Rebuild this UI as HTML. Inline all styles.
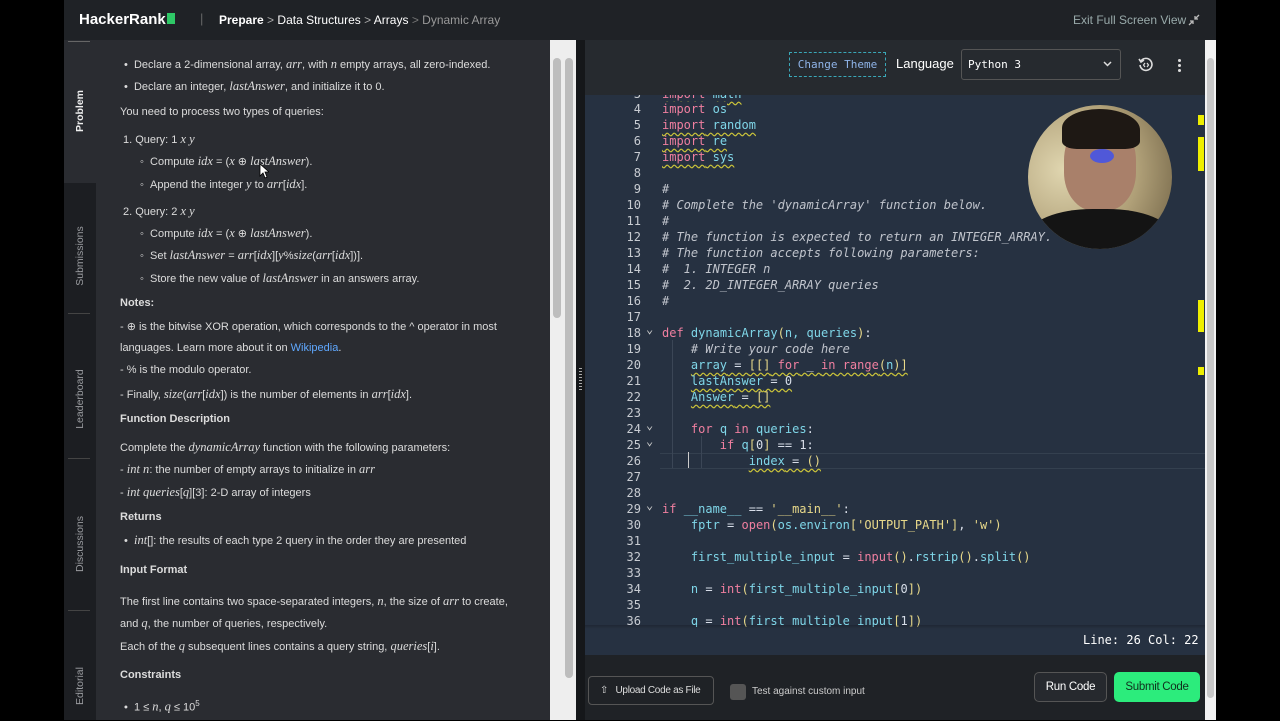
<!DOCTYPE html>
<html><head><meta charset="utf-8"><style>
*{margin:0;padding:0;box-sizing:border-box}
body{width:1280px;height:720px;background:#000;position:relative;overflow:hidden;font-family:"Liberation Sans",sans-serif}
.a{position:absolute;white-space:nowrap}
#top{left:64px;top:0;width:1152px;height:40px;background:#1f2226}
#side{left:64px;top:40px;width:32px;height:680px;background:#1c1e22}
#prob{left:96px;top:40px;width:454px;height:680px;background:#2a2c31}
.t{position:absolute;font-size:11px;color:#dcdcdc;white-space:nowrap}
.b{font-weight:bold}
i.m{font-family:"Liberation Serif",serif;font-size:12.5px}
.vt{position:absolute;transform:rotate(-90deg);transform-origin:center;font-size:10.5px;color:#9a9ca0;white-space:nowrap}
#ed{left:585px;top:40px;width:620px;height:680px;background:#1f2226}
#code{left:585px;top:95px;width:620px;height:532px;background:#263141;overflow:hidden}
#stat{left:585px;top:627px;width:620px;height:28px;background:#263141}
.c{position:absolute;font-family:"DejaVu Sans Mono",monospace;font-size:12px;white-space:pre;color:#d8dee9}
.ln{position:absolute;left:605px;width:36px;text-align:right;font-family:"DejaVu Sans Mono",monospace;font-size:12px;color:#c8ccd2}
.k{color:#f07fa0}.f{color:#7fd6e8}.cm{color:#c0c4cc;font-style:italic}.s{color:#e8d98a}.w{text-decoration:underline wavy #c9c23a;text-underline-offset:3px}
</style></head><body>
<div class="a" id="top"></div>
<div class="a" style="left:79px;top:11px;font-size:15px;font-weight:bold;color:#fff">HackerRank<span style="display:inline-block;width:8px;height:11px;background:#2ec866;margin-left:1px"></span></div>
<div class="a" style="left:200px;top:11px;color:#666;font-size:13px">|</div>
<div class="a" style="left:219px;top:13px;font-size:12px;color:#fff"><b>Prepare</b> <span style="color:#aaa">&gt;</span> Data Structures <span style="color:#aaa">&gt;</span> Arrays <span style="color:#777">&gt;</span> <span style="color:#999">Dynamic Array</span></div>
<div class="a" style="left:1073px;top:13px;font-size:12px;color:#9aa">Exit Full Screen View</div>
<svg class="a" style="left:1188px;top:14px" width="12" height="12" viewBox="0 0 12 12" stroke="#bbb" stroke-width="1.3" fill="none"><path d="M1 11L5 7M2 7H5V10M11 1L7 5M7 2V5H10"/></svg>

<div class="a" id="side"></div>
<div class="a" style="left:64px;top:40px;width:32px;height:143px;background:#2a2c31"></div>
<div class="a" style="left:68px;top:41px;width:22px;height:1px;background:#666"></div>
<div class="vt b" style="left:55px;top:105px;width:50px;text-align:center;color:#eee;font-weight:bold">Problem</div>
<div class="vt" style="left:45px;top:250px;width:70px;text-align:center">Submissions</div>
<div class="a" style="left:68px;top:313px;width:22px;height:1px;background:#444"></div>
<div class="vt" style="left:45px;top:393px;width:70px;text-align:center">Leaderboard</div>
<div class="a" style="left:68px;top:458px;width:22px;height:1px;background:#444"></div>
<div class="vt" style="left:45px;top:538px;width:70px;text-align:center">Discussions</div>
<div class="a" style="left:68px;top:610px;width:22px;height:1px;background:#444"></div>
<div class="vt" style="left:45px;top:680px;width:70px;text-align:center">Editorial</div>

<div class="a" id="prob"></div>
<div class="t" style="left:124px;top:57px">• &nbsp;Declare a 2-dimensional array, <i class="m">arr</i>, with <i class="m">n</i> empty arrays, all zero-indexed.</div>
<div class="t" style="left:124px;top:79px">• &nbsp;Declare an integer, <i class="m">lastAnswer</i>, and initialize it to 0.</div>
<div class="t" style="left:120px;top:106px">You need to process two types of queries:</div>
<div class="t" style="left:123px;top:132px">1. Query: 1 <i class="m">x y</i></div>
<div class="t" style="left:140px;top:154px">◦ &nbsp;Compute <i class="m">idx</i> = (<i class="m">x</i> ⊕ <i class="m">lastAnswer</i>).</div>
<div class="t" style="left:140px;top:177px">◦ &nbsp;Append the integer <i class="m">y</i> to <i class="m">arr</i>[<i class="m">idx</i>].</div>
<div class="t" style="left:123px;top:204px">2. Query: 2 <i class="m">x y</i></div>
<div class="t" style="left:140px;top:226px">◦ &nbsp;Compute <i class="m">idx</i> = (<i class="m">x</i> ⊕ <i class="m">lastAnswer</i>).</div>
<div class="t" style="left:140px;top:248px">◦ &nbsp;Set <i class="m">lastAnswer</i> = <i class="m">arr</i>[<i class="m">idx</i>][<i class="m">y</i>%<i class="m">size</i>(<i class="m">arr</i>[<i class="m">idx</i>])].</div>
<div class="t" style="left:140px;top:271px">◦ &nbsp;Store the new value of <i class="m">lastAnswer</i> in an answers array.</div>
<div class="t b" style="left:120px;top:297px">Notes:</div>
<div class="t" style="left:120px;top:320px">- ⊕ is the bitwise XOR operation, which corresponds to the ^ operator in most</div>
<div class="t" style="left:120px;top:342px">languages. Learn more about it on <span style="color:#5fa8ff">Wikipedia</span>.</div>
<div class="t" style="left:120px;top:364px">- % is the modulo operator.</div>
<div class="t" style="left:120px;top:387px">- Finally, <i class="m">size</i>(<i class="m">arr</i>[<i class="m">idx</i>]) is the number of elements in <i class="m">arr</i>[<i class="m">idx</i>].</div>
<div class="t b" style="left:120px;top:413px">Function Description</div>
<div class="t" style="left:120px;top:440px">Complete the <i class="m">dynamicArray</i> function with the following parameters:</div>
<div class="t" style="left:120px;top:462px">- <i class="m">int n</i>: the number of empty arrays to initialize in <i class="m">arr</i></div>
<div class="t" style="left:120px;top:485px">- <i class="m">int queries</i>[<i class="m">q</i>][3]: 2-D array of integers</div>
<div class="t b" style="left:120px;top:511px">Returns</div>
<div class="t" style="left:124px;top:533px">• &nbsp;<i class="m">int</i>[]: the results of each type 2 query in the order they are presented</div>
<div class="t b" style="left:120px;top:564px">Input Format</div>
<div class="t" style="left:120px;top:594px">The first line contains two space-separated integers, <i class="m">n</i>, the size of <i class="m">arr</i> to create,</div>
<div class="t" style="left:120px;top:616px">and <i class="m">q</i>, the number of queries, respectively.</div>
<div class="t" style="left:120px;top:639px">Each of the <i class="m">q</i> subsequent lines contains a query string, <i class="m">queries</i>[<i class="m">i</i>].</div>
<div class="t b" style="left:120px;top:669px">Constraints</div>
<div class="t" style="left:124px;top:699px">• &nbsp;1 ≤ <i class="m">n</i>, <i class="m">q</i> ≤ 10<sup style="font-size:8px">5</sup></div>
<svg class="a" style="left:259px;top:163px" width="10" height="16"><path d="M1 1V13L4 10L6 15L8 14L6 9H10Z" fill="#fff" stroke="#000" stroke-width=".8"/></svg>

<div class="a" style="left:550px;top:40px;width:26px;height:680px;background:#eee"></div>
<div class="a" style="left:553px;top:58px;width:8px;height:260px;background:#bdbdbd;border-radius:4px"></div>
<div class="a" style="left:565px;top:58px;width:8px;height:620px;background:#bdbdbd;border-radius:4px"></div>
<div class="a" style="left:576px;top:40px;width:9px;height:680px;background:#15171a"></div>
<div class="a" style="left:579px;top:368px;width:3px;height:22px;background:repeating-linear-gradient(#aaa 0 1px,transparent 1px 3px)"></div>

<div class="a" id="ed"></div>

<div class="a" id="code"></div>
<div class="a" style="left:660px;top:453px;width:545px;height:16px;border-top:1px solid #34404f;border-bottom:1px solid #34404f"></div>
<div class="a" style="left:672px;top:340px;width:1px;height:128px;background:#3b4656"></div>
<div class="a" style="left:701px;top:436px;width:1px;height:32px;background:#3b4656"></div>
<div class="a" style="left:688px;top:452px;width:1px;height:16px;background:#ccc"></div>

<div class="ln" style="top:87px">3</div><div class="c" style="left:662px;top:87px"><span class="k w">import</span> <span class="f w">math</span></div>
<div class="ln" style="top:102px">4</div><div class="c" style="left:662px;top:102px;background:#263141"><span class="k">import</span> <span class="f">os</span></div>
<div class="ln" style="top:118px">5</div><div class="c" style="left:662px;top:118px"><span class="w"><span class="k">import</span> <span class="f">random</span></span></div>
<div class="ln" style="top:134px">6</div><div class="c" style="left:662px;top:134px"><span class="w"><span class="k">import</span> <span class="f">re</span></span></div>
<div class="ln" style="top:150px">7</div><div class="c" style="left:662px;top:150px"><span class="w"><span class="k">import</span> <span class="f">sys</span></span></div>
<div class="ln" style="top:166px">8</div>
<div class="ln" style="top:182px">9</div><div class="c cm" style="left:662px;top:182px">#</div>
<div class="ln" style="top:198px">10</div><div class="c cm" style="left:662px;top:198px"># Complete the 'dynamicArray' function below.</div>
<div class="ln" style="top:214px">11</div><div class="c cm" style="left:662px;top:214px">#</div>
<div class="ln" style="top:230px">12</div><div class="c cm" style="left:662px;top:230px"># The function is expected to return an INTEGER_ARRAY.</div>
<div class="ln" style="top:246px">13</div><div class="c cm" style="left:662px;top:246px"># The function accepts following parameters:</div>
<div class="ln" style="top:262px">14</div><div class="c cm" style="left:662px;top:262px">#  1. INTEGER n</div>
<div class="ln" style="top:278px">15</div><div class="c cm" style="left:662px;top:278px">#  2. 2D_INTEGER_ARRAY queries</div>
<div class="ln" style="top:294px">16</div><div class="c cm" style="left:662px;top:294px">#</div>
<div class="ln" style="top:310px">17</div>
<div class="ln" style="top:326px">18</div><div class="c" style="left:646px;top:322px;color:#ccc">⌄</div><div class="c" style="left:662px;top:326px"><span class="k">def</span> <span class="f">dynamicArray</span><span class="s">(</span><span class="f">n, queries</span><span class="s">)</span>:</div>
<div class="ln" style="top:342px">19</div><div class="c cm" style="left:662px;top:342px">    # Write your code here</div>
<div class="ln" style="top:358px">20</div><div class="c" style="left:662px;top:358px">    <span class="w"><span class="f">array</span> = <span class="s">[[]</span> <span class="k">for</span> _ <span class="k">in</span> <span class="k">range</span><span class="s">(</span><span class="f">n</span><span class="s">)]</span></span></div>
<div class="ln" style="top:374px">21</div><div class="c" style="left:662px;top:374px">    <span class="w"><span class="f">lastAnswer</span> = 0</span></div>
<div class="ln" style="top:390px">22</div><div class="c" style="left:662px;top:390px">    <span class="w"><span class="f">Answer</span> = <span class="s">[]</span></span></div>
<div class="ln" style="top:406px">23</div>
<div class="ln" style="top:422px">24</div><div class="c" style="left:646px;top:418px;color:#ccc">⌄</div><div class="c" style="left:662px;top:422px">    <span class="k">for</span> <span class="f">q</span> <span class="k">in</span> <span class="f">queries</span>:</div>
<div class="ln" style="top:438px">25</div><div class="c" style="left:646px;top:434px;color:#ccc">⌄</div><div class="c" style="left:662px;top:438px">        <span class="k">if</span> <span class="f">q</span><span class="s">[</span>0<span class="s">]</span> == 1:</div>
<div class="ln" style="top:454px">26</div><div class="c" style="left:662px;top:454px">            <span class="w"><span class="f">index</span> = <span class="s">()</span></span></div>
<div class="ln" style="top:470px">27</div>
<div class="ln" style="top:486px">28</div>
<div class="ln" style="top:502px">29</div><div class="c" style="left:646px;top:498px;color:#ccc">⌄</div><div class="c" style="left:662px;top:502px"><span class="k">if</span> <span class="f">__name__</span> == <span class="s">'__main__'</span>:</div>
<div class="ln" style="top:518px">30</div><div class="c" style="left:662px;top:518px">    <span class="f">fptr</span> = <span class="k">open</span><span class="s">(</span><span class="f">os.environ</span><span class="s">[</span><span class="s">'OUTPUT_PATH'</span><span class="s">]</span>, <span class="s">'w')</span></div>
<div class="ln" style="top:534px">31</div>
<div class="ln" style="top:550px">32</div><div class="c" style="left:662px;top:550px">    <span class="f">first_multiple_input</span> = <span class="k">input</span><span class="s">()</span>.<span class="f">rstrip</span><span class="s">()</span>.<span class="f">split</span><span class="s">()</span></div>
<div class="ln" style="top:566px">33</div>
<div class="ln" style="top:582px">34</div><div class="c" style="left:662px;top:582px">    <span class="f">n</span> = <span class="k">int</span><span class="s">(</span><span class="f">first_multiple_input</span><span class="s">[</span>0<span class="s">])</span></div>
<div class="ln" style="top:598px">35</div>
<div class="ln" style="top:614px">36</div><div class="c" style="left:662px;top:614px">    <span class="f">q</span> = <span class="k">int</span><span class="s">(</span><span class="f">first_multiple_input</span><span class="s">[</span>1<span class="s">])</span></div>

<div class="a" id="stat"></div>
<div class="a" style="left:585px;top:625px;width:620px;height:4px;background:linear-gradient(rgba(0,0,0,.2),transparent)"></div>
<div class="a" style="left:1083px;top:633px;font-family:'DejaVu Sans Mono',monospace;font-size:12px;color:#fff">Line: 26 Col: 22</div>

<div class="a" style="left:585px;top:40px;width:620px;height:55px;background:#262a2f"></div>
<div class="a" style="left:789px;top:52px;width:97px;height:25px;border:1px dashed #3aa8b8;color:#8fb4e8;font-family:'DejaVu Sans Mono',monospace;font-size:11px;line-height:23px;text-align:center">Change Theme</div>
<div class="a" style="left:896px;top:56px;font-size:13px;color:#fff">Language</div>
<div class="a" style="left:961px;top:49px;width:160px;height:31px;border:1px solid #555;border-radius:3px;color:#fff;font-family:'DejaVu Sans Mono',monospace;font-size:11px;padding:8px 6px">Python 3</div>
<svg class="a" style="left:1103px;top:61px" width="9" height="6"><path d="M1 1L4.5 4.5L8 1" stroke="#ddd" stroke-width="1.5" fill="none"/></svg>
<svg class="a" style="left:1138px;top:57px" width="16" height="16" viewBox="0 0 16 16" fill="none" stroke="#ddd" stroke-width="1.6"><path d="M3 4A6 6 0 1 1 2 8"/><path d="M1 2L3 5L6 3"/><path d="M7 6L5.5 8L7 10M9 6L10.5 8L9 10" stroke-width="1.2"/></svg>
<div class="a" style="left:1178px;top:59px;width:3px;height:3px;background:#ddd;border-radius:2px;box-shadow:0 5px #ddd,0 10px #ddd"></div>

<div class="a" style="left:1198px;top:115px;width:6px;height:10px;background:#ee0"></div>
<div class="a" style="left:1198px;top:137px;width:6px;height:34px;background:#ee0"></div>
<div class="a" style="left:1198px;top:300px;width:6px;height:32px;background:#ee0"></div>
<div class="a" style="left:1198px;top:367px;width:6px;height:8px;background:#ee0"></div>

<div class="a" style="left:1028px;top:105px;width:144px;height:144px;border-radius:50%;overflow:hidden;background:radial-gradient(circle at 25% 45%,#e0d6b0,#b0a078 55%,#6a5c40)">
  <div style="position:absolute;left:36px;top:14px;width:72px;height:92px;border-radius:45% 45% 42% 42%;background:#a9806a"></div>
  <div style="position:absolute;left:34px;top:4px;width:78px;height:40px;border-radius:50% 55% 20% 20%;background:#1e1814"></div>
  <div style="position:absolute;left:62px;top:44px;width:24px;height:14px;border-radius:50%;background:#5058d8"></div>
  <div style="position:absolute;left:0;top:104px;width:144px;height:60px;border-radius:45% 45% 0 0;background:#141414"></div>
</div>

<div class="a" style="left:588px;top:676px;width:126px;height:29px;border:1px solid #555;border-radius:4px;color:#ddd;font-size:10px;padding:8px 0 0 11px;letter-spacing:-0.3px">⇧&nbsp;&nbsp; Upload Code as File</div>
<div class="a" style="left:730px;top:684px;width:16px;height:16px;background:#555;border-radius:3px"></div>
<div class="a" style="left:752px;top:686px;font-size:10px;color:#ccc">Test against custom input</div>
<div class="a" style="left:1034px;top:672px;width:73px;height:30px;border:1px solid #555;border-radius:5px;background:#26292e;color:#fff;font-size:11.5px;text-align:center;line-height:28px;letter-spacing:-0.3px">Run Code</div>
<div class="a" style="left:1114px;top:672px;width:86px;height:30px;border-radius:5px;background:#2cec7c;color:#11301e;font-size:11.5px;text-align:center;line-height:30px;letter-spacing:-0.3px">Submit Code</div>
<div class="a" style="left:1205px;top:40px;width:11px;height:680px;background:#f2f2f2"></div>
<div class="a" style="left:1207px;top:58px;width:7px;height:640px;background:#c8c8c8;border-radius:4px"></div>
</body></html>
